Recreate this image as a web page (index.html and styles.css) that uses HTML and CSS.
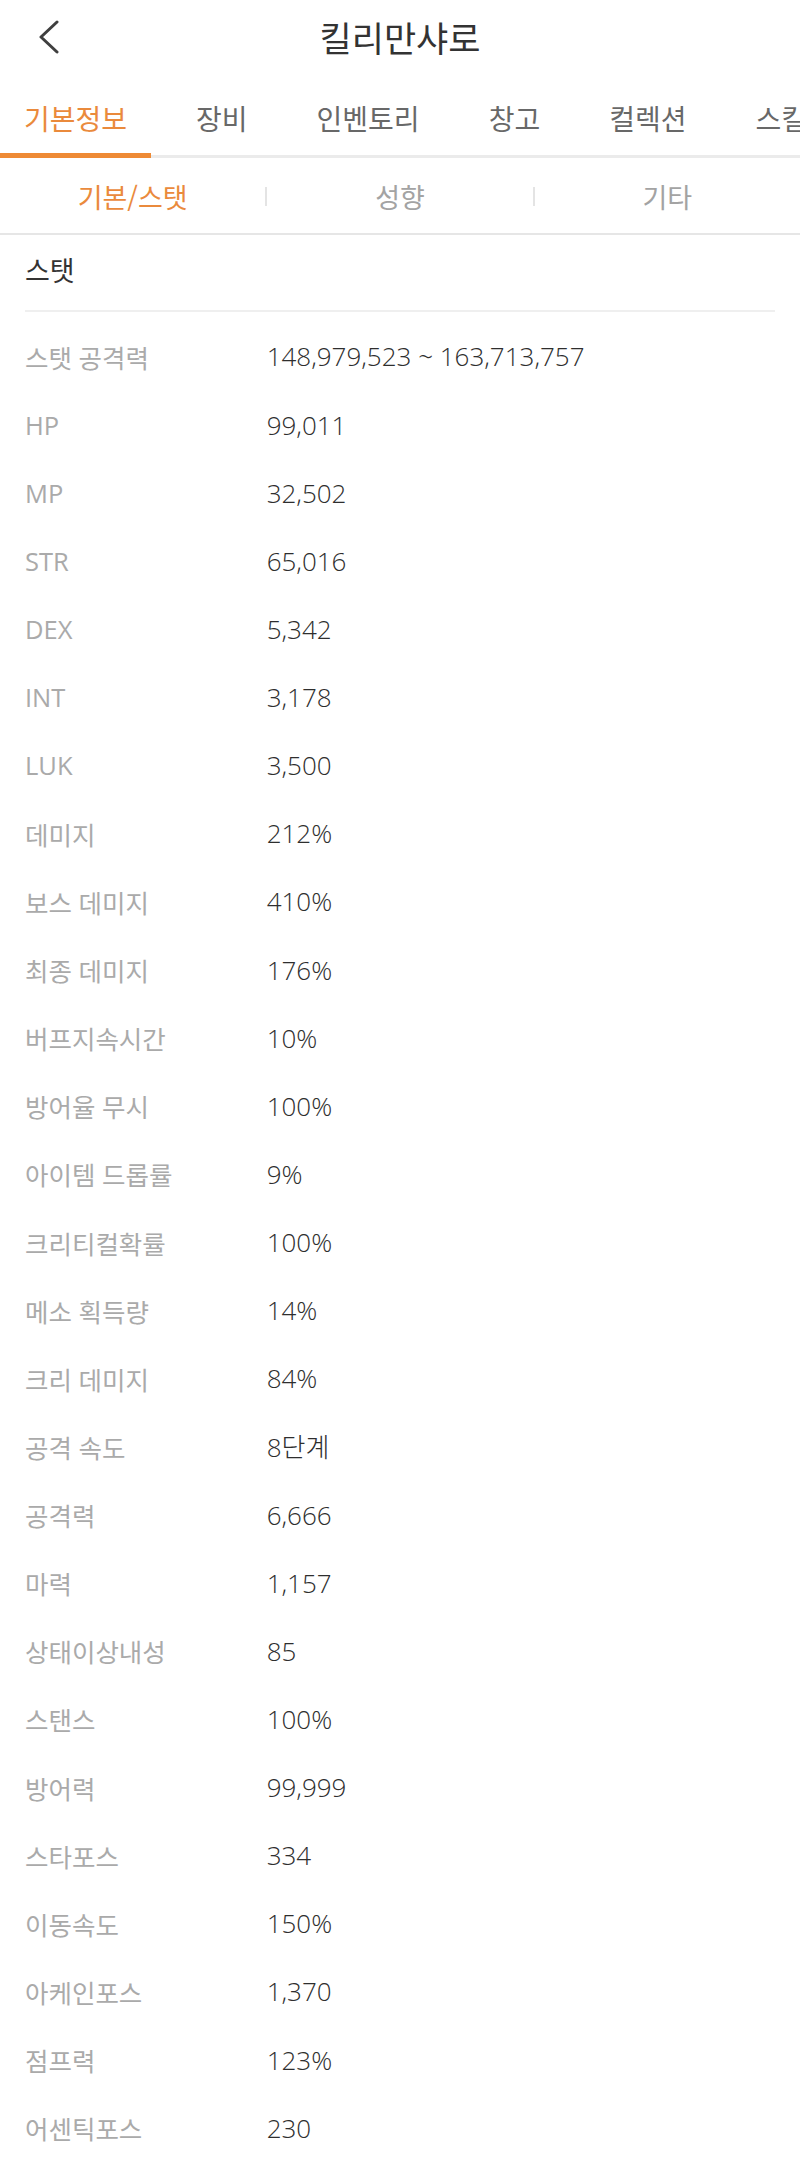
FILE: index.html
```html
<!DOCTYPE html>
<html lang="ko">
<head>
<meta charset="utf-8">
<title>킬리만샤로</title>
<link rel="stylesheet" href="styles.css">
</head>
<body>
<header class="topbar">
  <div class="back">
    <svg width="22" height="34" viewBox="0 0 22 34"><polyline points="19,2 3,17 19,32" fill="none" stroke="#3f3f3f" stroke-width="3" stroke-linecap="round" stroke-linejoin="round"/></svg>
  </div>
  <h1 class="title">킬리만샤로</h1>
  <div></div>
</header>
<nav class="tabs">
  <div class="tab active">기본정보</div>
  <div class="tab">장비</div>
  <div class="tab">인벤토리</div>
  <div class="tab">창고</div>
  <div class="tab">컬렉션</div>
  <div class="tab">스킬</div>
</nav>
<nav class="subtabs">
  <div class="subtab active">기본/스탯</div>
  <span class="sep"></span>
  <div class="subtab">성향</div>
  <span class="sep"></span>
  <div class="subtab">기타</div>
</nav>
<section class="stats">
  <h2 class="heading">스탯</h2>
  <div class="rows">
    <div class="row"><span class="label">스탯 공격력</span><span class="value">148,979,523 ~ 163,713,757</span></div>
    <div class="row"><span class="label">HP</span><span class="value">99,011</span></div>
    <div class="row"><span class="label">MP</span><span class="value">32,502</span></div>
    <div class="row"><span class="label">STR</span><span class="value">65,016</span></div>
    <div class="row"><span class="label">DEX</span><span class="value">5,342</span></div>
    <div class="row"><span class="label">INT</span><span class="value">3,178</span></div>
    <div class="row"><span class="label">LUK</span><span class="value">3,500</span></div>
    <div class="row"><span class="label">데미지</span><span class="value">212%</span></div>
    <div class="row"><span class="label">보스 데미지</span><span class="value">410%</span></div>
    <div class="row"><span class="label">최종 데미지</span><span class="value">176%</span></div>
    <div class="row"><span class="label">버프지속시간</span><span class="value">10%</span></div>
    <div class="row"><span class="label">방어율 무시</span><span class="value">100%</span></div>
    <div class="row"><span class="label">아이템 드롭률</span><span class="value">9%</span></div>
    <div class="row"><span class="label">크리티컬확률</span><span class="value">100%</span></div>
    <div class="row"><span class="label">메소 획득량</span><span class="value">14%</span></div>
    <div class="row"><span class="label">크리 데미지</span><span class="value">84%</span></div>
    <div class="row"><span class="label">공격 속도</span><span class="value">8단계</span></div>
    <div class="row"><span class="label">공격력</span><span class="value">6,666</span></div>
    <div class="row"><span class="label">마력</span><span class="value">1,157</span></div>
    <div class="row"><span class="label">상태이상내성</span><span class="value">85</span></div>
    <div class="row"><span class="label">스탠스</span><span class="value">100%</span></div>
    <div class="row"><span class="label">방어력</span><span class="value">99,999</span></div>
    <div class="row"><span class="label">스타포스</span><span class="value">334</span></div>
    <div class="row"><span class="label">이동속도</span><span class="value">150%</span></div>
    <div class="row"><span class="label">아케인포스</span><span class="value">1,370</span></div>
    <div class="row"><span class="label">점프력</span><span class="value">123%</span></div>
    <div class="row"><span class="label">어센틱포스</span><span class="value">230</span></div>
  </div>
</section>
</body>
</html>
```
FILE: styles.css
```css
* { box-sizing: border-box; }
html, body { margin: 0; padding: 0; background: #fff; }
body {
  font-family: "Open Sans", "Noto Sans CJK KR", sans-serif;
  color: #333;
}

.topbar {
  height: 74px;
  display: grid;
  grid-template-columns: 1fr auto 1fr;
  align-items: center;
}
.back {
  display: flex;
  align-items: center;
  padding-left: 38px;
}
.back svg { display: block; }
.title {
  margin: 0;
  font-family: "Noto Sans CJK KR", sans-serif;
  font-weight: 400;
  font-size: 35px;
  line-height: 42px;
  color: #333;
}

.tabs {
  height: 84px;
  display: flex;
  gap: 21px;
  overflow: hidden;
  white-space: nowrap;
  box-shadow: inset 0 -3px 0 #ebebeb;
}
.tab {
  flex: 0 0 auto;
  height: 84px;
  padding: 9px 24px 0;
  border-bottom: 5px solid transparent;
  display: flex;
  align-items: center;
  font-family: "Noto Sans CJK KR", sans-serif;
  font-size: 28px;
  color: #686868;
}
.tab.active {
  color: #ea8a3c;
  border-bottom-color: #ee8a35;
}

.subtabs {
  height: 77px;
  padding-top: 1px;
  display: flex;
  align-items: center;
  border-bottom: 2px solid #e6e6e6;
}
.subtab {
  flex: 1 1 0;
  text-align: center;
  font-family: "Noto Sans CJK KR", sans-serif;
  font-size: 27px;
  color: #a3a3a3;
}
.subtab.active { color: #ea8a3c; }
.sep {
  flex: 0 0 2px;
  height: 19px;
  background: #e4e4e4;
}

.stats { padding: 0 25px; }
.heading {
  margin: 0;
  height: 77px;
  line-height: 70px;
  border-bottom: 2px solid #efefef;
  font-family: "Noto Sans CJK KR", sans-serif;
  font-weight: 400;
  font-size: 27px;
  color: #333;
}
.rows { margin-top: 10.4px; }
.row {
  height: 68.13px;
  display: grid;
  grid-template-columns: 241.67px 1fr;
  align-items: center;
  white-space: nowrap;
}
.label {
  font-size: 25.5px;
  color: #aaaaaa;
}
.value {
  font-size: 26px;
  font-weight: 300;
  color: #2e2e2e;
}
```
